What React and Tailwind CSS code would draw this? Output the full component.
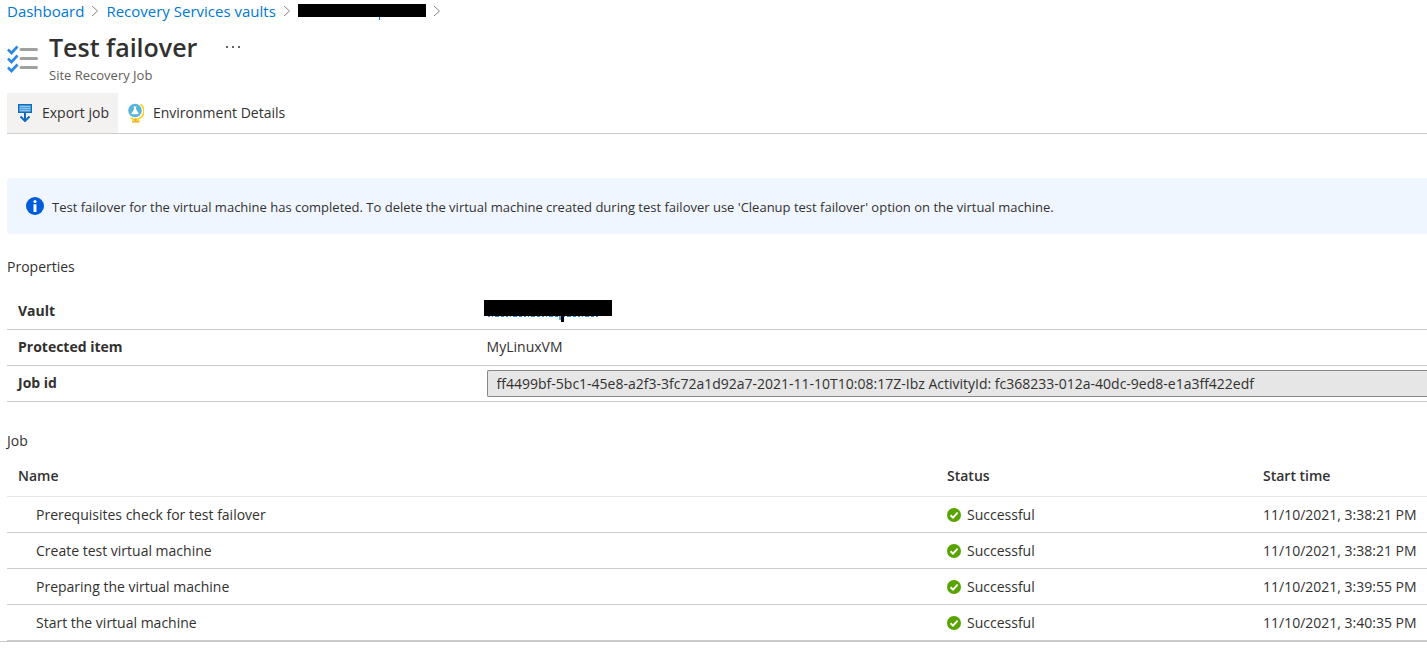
const steps = [
	{ name: 'Prerequisites check for test failover', status: 'Successful', start: '11/10/2021, 3:38:21 PM' },
	{ name: 'Create test virtual machine', status: 'Successful', start: '11/10/2021, 3:38:21 PM' },
	{ name: 'Preparing the virtual machine', status: 'Successful', start: '11/10/2021, 3:39:55 PM' },
	{ name: 'Start the virtual machine', status: 'Successful', start: '11/10/2021, 3:40:35 PM' },
]

const jobId = 'ff4499bf-5bc1-45e8-a2f3-3fc72a1d92a7-2021-11-10T10:08:17Z-Ibz ActivityId: fc368233-012a-40dc-9ed8-e1a3ff422edf'

const ChevronIcon = () => (
	<svg width="8" height="12" viewBox="0 0 8 12" fill="none" stroke="#8a8886" aria-hidden="true">
		<path d="M1 1l5.5 5L1 11" />
	</svg>
)

const ChecklistIcon = () => (
	<svg width="32" height="28" viewBox="0 0 32 28" fill="none" className="shrink-0" aria-hidden="true">
		<g stroke="#2b88e6" strokeWidth="2.6">
			<path d="M1 4.5l3.5 3.5L10.500 1.500" />
			<path d="M1 13.500l3.500 3.500L10.500 10.500" />
			<path d="M1 22.500l3.500 3.500L10.500 19.500" />
		</g>
		<g stroke="#a0a0a0" strokeWidth="3" strokeLinecap="round">
			<path d="M14 4.500h15.500M14 13.500h15.500M14 22.500h15.500" />
		</g>
	</svg>
)

const ExportIcon = () => (
	<svg width="16" height="18" viewBox="0 0 16 18" fill="none" aria-hidden="true">
		<rect x="1.750" y="0.750" width="12.500" height="7.500" fill="#8cc3ea" stroke="#0f6cbd" strokeWidth="1.500" />
		<path d="M3 3.500h10M3 5.500h10" stroke="#4f9fd8" />
		<path d="M8 8v8.500M3.500 12.500L8 17l4.500-4.500" stroke="#0f6cbd" strokeWidth="2" />
	</svg>
)

const EnvironmentIcon = () => (
	<svg width="16" height="20" viewBox="0 0 16 20" fill="none" aria-hidden="true">
		<path d="M12.500 1.200a8.400 8.400 0 0 1-10 13.600" stroke="#fcd116" strokeWidth="1.600" />
		<path d="M7.500 15.500v2.500M4 18.500h7.500" stroke="#f2b01e" strokeWidth="1.800" />
		<circle cx="7" cy="7.500" r="6.800" fill="#59b4d9" />
		<path d="M5.500 3.500h3v.8H8v2l2.500 4c.3.500 0 1-.6 1H4.100c-.6 0-.9-.5-.6-1l2.500-4v-2h-.5z" fill="#fff" />
	</svg>
)

const InfoIcon = () => (
	<svg width="18" height="18" viewBox="0 0 18 18" className="shrink-0" aria-hidden="true">
		<circle cx="9" cy="9" r="9" fill="#015cda" />
		<circle cx="9" cy="4.500" r="1.600" fill="#fff" />
		<path d="M7.500 7.200h3v7.800h-3z" fill="#fff" />
	</svg>
)

const SuccessIcon = () => (
	<svg width="14" height="14" viewBox="0 0 14 14" fill="none" className="shrink-0" aria-hidden="true">
		<circle cx="7" cy="7" r="7" fill="#57a300" />
		<path d="M3.500 7.200l2.500 2.400 4.600-5" stroke="#fff" strokeWidth="1.900" />
	</svg>
)

// masked vault name, the link's descenders stick out below the bar
const MaskedCrumb = () => (
	<svg width="128" height="19" viewBox="0 0 128 19" aria-hidden="true">
		<rect y="3" width="128" height="13" fill="#000" />
		<rect x="81" y="16" width="1" height="3" fill="#0078d4" />
	</svg>
)

const MaskedVault = () => (
	<svg width="128" height="22" viewBox="0 0 128 22" shapeRendering="crispEdges" aria-hidden="true">
		<path d="M4 16.500h110" stroke="#2b88d8" strokeDasharray="2 2 1 2 4 2 3 2" />
		<rect width="128" height="16" fill="#000" />
		<rect x="75" y="16" width="2" height="4" fill="#5aa9e6" />
		<rect x="77" y="15" width="3" height="7" fill="#000" />
	</svg>
)

export default function App() {
	return (
		<div className="overflow-hidden border-b border-[#c8c8c8] bg-white pl-[7px] font-['Open_Sans','Noto_Sans',sans-serif] text-sm leading-5 text-[#323130]">
			<nav aria-label="Breadcrumb" className="flex h-[21px] items-center gap-[7px] whitespace-nowrap text-[15px] text-[#0078d4]">
				<a href="#dashboard">Dashboard</a>
				<ChevronIcon />
				<a href="#vaults">Recovery Services vaults</a>
				<ChevronIcon />
				<a href="#vault" aria-label="Vault">
					<MaskedCrumb />
				</a>
				<ChevronIcon />
			</nav>

			<header className="flex h-[72px] items-center gap-[10px] pt-1">
				<ChecklistIcon />
				<div>
					<div className="flex items-center gap-7">
						<h1 className="text-[25px] leading-8 font-semibold">Test failover</h1>
						<button type="button" aria-label="More options">
							<svg width="16" height="4" viewBox="0 0 16 4" fill="#323130" aria-hidden="true">
								<circle cx="2" cy="2" r="1" />
								<circle cx="8" cy="2" r="1" />
								<circle cx="14" cy="2" r="1" />
							</svg>
						</button>
					</div>
					<p className="text-[13px] leading-6 text-[#605e5c]">Site Recovery Job</p>
				</div>
			</header>

			<div className="flex h-[41px] border-b border-[#ccc]">
				<button type="button" className="flex items-center gap-[9px] bg-[#f3f2f1] pr-[9px] pl-[10px]">
					<ExportIcon />
					Export job
				</button>
				<button type="button" className="flex items-center gap-[9px] px-[10px]">
					<EnvironmentIcon />
					Environment Details
				</button>
			</div>

			<div role="status" className="mt-11 flex h-14 items-center gap-2 rounded-l-sm bg-[#f0f6ff] pl-[19px] text-[13px]">
				<InfoIcon />
				<p className="pt-[2px]">Test failover for the virtual machine has completed. To delete the virtual machine created during test failover use 'Cleanup test failover' option on the virtual machine.</p>
			</div>

			<h2 className="mt-[23px] mb-4">Properties</h2>
			<table className="w-full table-fixed border-collapse text-left">
				<tbody>
					<tr className="h-9 border-b border-[#ccc]">
						<th scope="row" className="w-[33%] pl-[11px] font-bold">
							Vault
						</th>
						<td className="pl-2">
							<a href="#vault" aria-label="Vault" className="inline-block align-middle">
								<MaskedVault />
							</a>
						</td>
					</tr>
					<tr className="h-9 border-b border-[#ccc]">
						<th scope="row" className="pl-[11px] font-bold">
							Protected item
						</th>
						<td className="pl-[11px]">MyLinuxVM</td>
					</tr>
					<tr className="h-9 border-b border-[#ccc]">
						<th scope="row" className="pl-[11px] font-bold">
							<label htmlFor="job-id">Job id</label>
						</th>
						<td className="pl-[11px]">
							<input id="job-id" readOnly value={jobId} className="block h-[27px] w-full rounded-l-xs border border-r-0 border-[#8a8886] bg-[#e6e6e6] pl-[9px]" />
						</td>
					</tr>
				</tbody>
			</table>

			<h2 className="mt-[29px] mb-[6px]">Job</h2>
			<table className="w-full table-fixed border-collapse text-left whitespace-nowrap">
				<thead>
					<tr className="h-10 border-b border-[#e8e8e8]">
						<th className="pl-[11px] font-semibold">Name</th>
						<th className="w-[316px] pl-[11px] font-semibold">Status</th>
						<th className="w-[175px] pl-[11px] font-semibold">Start time</th>
					</tr>
				</thead>
				<tbody>
					{steps.map(step => (
						<tr key={step.name} className="h-9 border-b border-[#ccc]">
							<td className="pl-[29px]">{step.name}</td>
							<td className="pl-[11px]">
								<span className="flex items-center gap-[6px]">
									<SuccessIcon />
									{step.status}
								</span>
							</td>
							<td className="pl-[11px]">{step.start}</td>
						</tr>
					))}
				</tbody>
			</table>
		</div>
	)
}
